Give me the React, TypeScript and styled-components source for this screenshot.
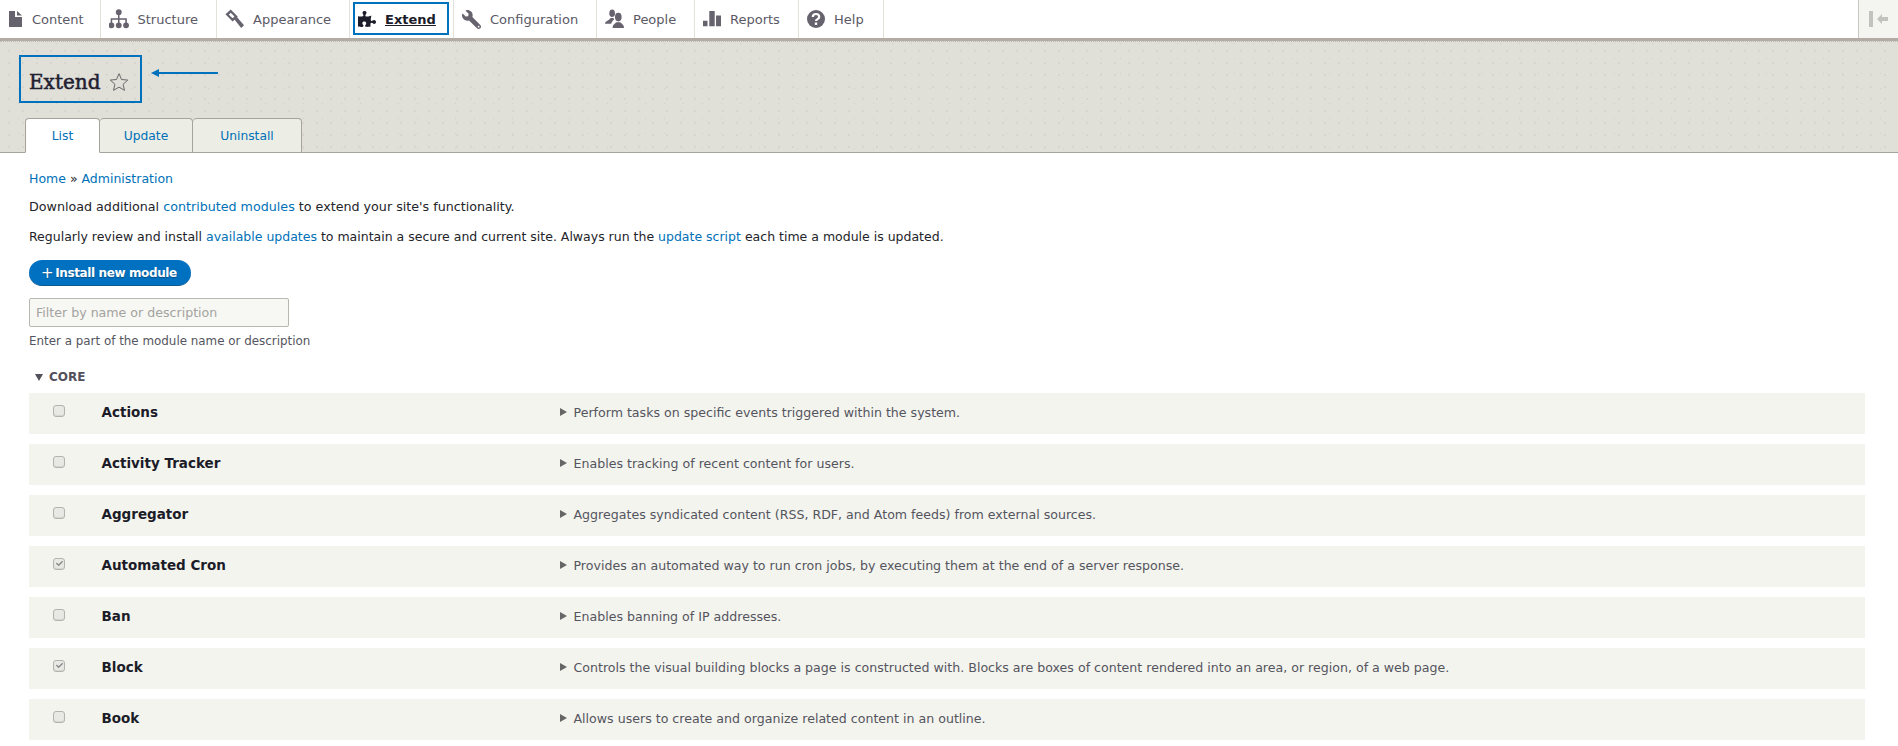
import React from "react";
import styled, { createGlobalStyle } from "styled-components";
import { FaPuzzlePiece, FaWrench, FaCheck } from "react-icons/fa";

const GlobalStyle = createGlobalStyle`
  html, body { margin: 0; padding: 0; background: #fff; }
  body {
    font-family: "DejaVu Sans", Verdana, sans-serif;
    font-size: 12.5px;
    color: #232429;
    overflow: hidden;
  }
  a { color: #0071b8; text-decoration: none; }
`;

const Page = styled.div`
  width: 1898px;
  height: 746px;
  overflow: hidden;
`;

const Toolbar = styled.nav`
  display: flex;
  height: 38px;
  justify-content: space-between;
  background: #fff;
  border-bottom: 3px solid #b3aca5;
`;

const NavList = styled.div`
  display: flex;
`;

const NavItem = styled.a<{ $w: number; $active?: boolean }>`
  display: flex;
  align-items: center;
  gap: 9px;
  box-sizing: border-box;
  width: ${(p) => p.$w}px;
  padding-left: 8px;
  border-right: 1px solid #e2e1da;
  color: ${(p) => (p.$active ? "#1c1c2b" : "#5a5965")};
  font-weight: ${(p) => (p.$active ? 700 : 400)};
  font-size: 13px;
  text-decoration: ${(p) => (p.$active ? "underline" : "none")};
  position: relative;
`;

const ActiveBox = styled.span`
  position: absolute;
  left: 3px;
  top: 2px;
  width: 96px;
  height: 33px;
  box-sizing: border-box;
  border: 2px solid #0071bc;
`;

const IconSlot = styled.span<{ $w: number; $dark?: boolean }>`
  display: flex;
  flex: none;
  width: ${(p) => p.$w}px;
  justify-content: center;
  color: ${(p) => (p.$dark ? "#1c1c2b" : "#66626e")};
`;

const FlippedWrench = styled(FaWrench)`
  transform: scaleX(-1);
`;

const Toggle = styled.div`
  display: flex;
  align-items: center;
  justify-content: center;
  width: 39px;
  background: #f4f4f1;
  border-left: 1px solid #c9c9c4;
`;

const Header = styled.header`
  position: relative;
  height: 112px;
  box-sizing: border-box;
  padding: 13px 0 0 19px;
  background-color: #e0dfd8;
  background-image: radial-gradient(circle, #cbcac5 0.6px, transparent 0.8px),
    radial-gradient(circle, #cfcec9 0.6px, transparent 0.8px);
  background-size: 14px 12px, 19px 15px;
  background-position: 2px 3px, 9px 9px;
  border-top: 1px dotted #bdbbb5;
  border-bottom: 1px solid #a6a39c;
`;

const TitleBox = styled.div`
  display: inline-flex;
  align-items: center;
  gap: 9px;
  box-sizing: border-box;
  width: 123px;
  height: 48px;
  padding: 5px 0 0 8px;
  border: 2px solid #0071bc;
`;

const Title = styled.h1`
  margin: 0;
  font-family: "DejaVu Serif", serif;
  font-size: 20px;
  font-weight: 400;
  color: #1f2030;
  -webkit-text-stroke: 0.5px #1f2030;
`;

const Arrow = styled.svg`
  position: absolute;
  left: 151px;
  top: 25px;
`;

const Tabs = styled.div`
  display: flex;
  position: absolute;
  left: 25px;
  bottom: -1px;
  height: 35px;
`;

const Tab = styled.a<{ $w: number; $active?: boolean }>`
  display: flex;
  align-items: center;
  justify-content: center;
  box-sizing: border-box;
  width: ${(p) => p.$w}px;
  background: ${(p) => (p.$active ? "#fff" : "#ecede5")};
  border: 1px solid #a6a39c;
  border-left-width: ${(p) => (p.$active ? 1 : 0)}px;
  border-bottom-color: ${(p) => (p.$active ? "#fff" : "#a6a39c")};
  border-radius: 4px 4px 0 0;
  font-size: 12.3px;
`;

const Content = styled.main`
  padding: 18px 33px 0 29px;
`;

const Crumbs = styled.p`
  margin: 0 0 12px;
  line-height: 16px;
`;

const Line = styled.p<{ $size?: number }>`
  margin: 0 0 14px;
  line-height: 16px;
  font-size: ${(p) => p.$size ?? 12.5}px;
`;

const InstallButton = styled.a`
  display: inline-flex;
  align-items: center;
  gap: 2px;
  box-sizing: border-box;
  width: 162px;
  height: 26px;
  margin-top: 1px;
  padding-left: 12px;
  border-radius: 13px;
  background: #0071c0;
  border-bottom: 1px solid #0a5a92;
  color: #fff;
  font-weight: 700;
  font-size: 12px;
  letter-spacing: -0.38px;
  text-shadow: 0 1px 1px #0a4f80;
`;

const Plus = styled.span`
  font-weight: 400;
  font-size: 15px;
`;

const Filter = styled.input`
  display: block;
  box-sizing: border-box;
  width: 260px;
  height: 29px;
  margin-top: 12px;
  padding: 0 6px;
  background: #f7f7f3;
  border: 1px solid #b8b8b0;
  border-radius: 2px;
  font-family: inherit;
  font-size: 12.6px;
  &::placeholder { color: #a3a3a0; opacity: 1; }
`;

const Hint = styled.div`
  margin-top: 7px;
  font-size: 11.9px;
  line-height: 14px;
  color: #555560;
`;

const SectionTitle = styled.div`
  display: flex;
  align-items: center;
  gap: 6px;
  margin: 21px 0 8px 6px;
  line-height: 16px;
  font-weight: 700;
  font-size: 12px;
  color: #53505c;
`;

const Caret = styled.span<{ $open?: boolean }>`
  flex: none;
  width: 0;
  height: 0;
  border-style: solid;
  border-color: transparent;
  ${(p) =>
    p.$open
      ? "border-width: 7px 4px 0; border-top-color: #53505c;"
      : "border-width: 4px 0 4px 7px; border-left-color: #666;"}
`;

const Rows = styled.div`
  display: flex;
  flex-direction: column;
  gap: 10px;
`;

const Row = styled.div`
  display: grid;
  grid-template-columns: 72.5px 458px 1fr;
  align-items: center;
  height: 41px;
  background: #f3f4ee;
`;

const CheckBox = styled.span<{ $on?: boolean }>`
  display: flex;
  align-items: center;
  justify-content: center;
  box-sizing: border-box;
  width: 12px;
  height: 12px;
  margin: -6px 0 0 24px;
  border: 1px solid #b4b4af;
  border-radius: 3px;
  background: #e8e8e4;
  color: #8a8a88;
  box-shadow: inset 0 -1px 1px #d5d5d0;
`;

const ModuleName = styled.span`
  margin-top: -4px;
  font-size: 13.5px;
  font-weight: 700;
  color: #1c1c28;
`;

const Description = styled.span`
  display: flex;
  align-items: center;
  gap: 7px;
  margin-top: -3px;
  font-size: 12.6px;
  color: #55555e;
`;

const Doc = () => (
  <svg width="13" height="16" viewBox="0 0 13 16" fill="currentColor">
    <path d="M0 0h6v6h7v10H0z" />
    <path d="M8 0l5 4.500H8z" />
  </svg>
);

const Tree = () => (
  <svg width="20" height="20" viewBox="0 0 20 20" fill="none" stroke="currentColor" strokeWidth="1.600">
    <circle cx="10" cy="3" r="2.200" fill="currentColor" />
    <circle cx="2.500" cy="16.500" r="2.200" fill="currentColor" />
    <circle cx="10" cy="16.500" r="2.200" fill="currentColor" />
    <circle cx="17.500" cy="16.500" r="2.200" fill="currentColor" />
    <path d="M10 5v10M2.500 15v-5h15v5" />
  </svg>
);

const Brush = () => (
  <svg width="20" height="20" viewBox="0 0 20 20" fill="currentColor">
    <path d="M6 0l7.500 7.500-5.500 5L.5 5zM6 3.500L4 5.500l4 3.800 2-2z" fillRule="evenodd" />
    <path d="M10 10.500l2.500-2.500 7.500 8.500-3 3z" />
  </svg>
);

const Users = () => (
  <svg width="20" height="20" viewBox="0 0 20 20" fill="currentColor">
    <ellipse cx="7.500" cy="4" rx="3" ry="4" />
    <path d="M0 15c0-2.500 3-3 5-5l1-1h3l.500 1.500C8 12 7 13 6.500 15z" />
    <ellipse cx="14" cy="8" rx="3.500" ry="4.500" />
    <path d="M8 19.500c0-3.500 2.500-4.500 4-6h4c1.500 1.500 4 2.500 4 6z" />
  </svg>
);

const Bars = () => (
  <svg width="20" height="18" viewBox="0 0 20 18" fill="currentColor">
    <path d="M0 11h5v6H0zM7 0h6v17H7zM14.500 5H20v12h-5.500z" />
  </svg>
);

const Help = () => (
  <svg width="18" height="18" viewBox="0 0 18 18">
    <circle cx="9" cy="9" r="9" fill="currentColor" />
    <path d="M5.800 7c0-4 6.400-4 6.400 0 0 2.200-3.200 2-3.200 4" fill="none" stroke="#fff" strokeWidth="2.200" />
    <rect x="7.800" y="12.500" width="2.400" height="2.400" fill="#fff" />
  </svg>
);

const navItems = [
  { label: "Content", w: 101, slot: 15, icon: <Doc /> },
  { label: "Structure", w: 116, slot: 19.5, icon: <Tree /> },
  { label: "Appearance", w: 133, slot: 19, icon: <Brush /> },
  { label: "Extend", w: 104, slot: 18, icon: <FaPuzzlePiece size={20} />, active: true },
  { label: "Configuration", w: 143, slot: 19, icon: <FlippedWrench size={19} /> },
  { label: "People", w: 98, slot: 19, icon: <Users /> },
  { label: "Reports", w: 104, slot: 18, icon: <Bars /> },
  { label: "Help", w: 85, slot: 18, icon: <Help /> },
];

const modules = [
  { name: "Actions", desc: "Perform tasks on specific events triggered within the system." },
  { name: "Activity Tracker", desc: "Enables tracking of recent content for users." },
  { name: "Aggregator", desc: "Aggregates syndicated content (RSS, RDF, and Atom feeds) from external sources." },
  { name: "Automated Cron", desc: "Provides an automated way to run cron jobs, by executing them at the end of a server response.", on: true },
  { name: "Ban", desc: "Enables banning of IP addresses." },
  { name: "Block", desc: "Controls the visual building blocks a page is constructed with. Blocks are boxes of content rendered into an area, or region, of a web page.", on: true },
  { name: "Book", desc: "Allows users to create and organize related content in an outline." },
];

export default function App() {
  return (
    <Page>
      <GlobalStyle />
      <Toolbar>
        <NavList>
          {navItems.map((n) => (
            <NavItem key={n.label} $w={n.w} $active={n.active}>
              {n.active && <ActiveBox />}
              <IconSlot $w={n.slot} $dark={n.active}>{n.icon}</IconSlot>
              {n.label}
            </NavItem>
          ))}
        </NavList>
        <Toggle>
          <svg width="20" height="16" viewBox="0 0 20 16" fill="#c2c2be">
            <rect x="0" y="0" width="4" height="16" />
            <path d="M8 8l5-5v3h6v4h-6v3z" />
          </svg>
        </Toggle>
      </Toolbar>
      <Header>
        <TitleBox>
          <Title>Extend</Title>
          <svg width="20" height="20" viewBox="0 0 24 24" fill="none" stroke="#6b6a6a" strokeWidth="1.200">
            <path d="M12 2l3 7 7.500.7-5.600 5 1.700 7.300L12 18.200 5.400 22l1.700-7.300-5.600-5L9 9z" />
          </svg>
        </TitleBox>
        <Arrow width="68" height="12" viewBox="0 0 68 12">
          <path d="M0 6l8-4v3h59v2H8v3z" fill="#0071bc" />
        </Arrow>
        <Tabs>
          <Tab $w={75} $active>List</Tab>
          <Tab $w={93}>Update</Tab>
          <Tab $w={109}>Uninstall</Tab>
        </Tabs>
      </Header>
      <Content>
        <Crumbs>
          <a href="#">Home</a> » <a href="#">Administration</a>
        </Crumbs>
        <Line $size={12.7}>
          Download additional <a href="#">contributed modules</a> to extend your site's functionality.
        </Line>
        <Line>
          Regularly review and install <a href="#">available updates</a> to maintain a secure and current site. Always run the <a href="#">update script</a> each time a module is updated.
        </Line>
        <InstallButton href="#"><Plus>+</Plus>Install new module</InstallButton>
        <Filter placeholder="Filter by name or description" />
        <Hint>Enter a part of the module name or description</Hint>
        <SectionTitle>
          <Caret $open />
          CORE
        </SectionTitle>
        <Rows>
          {modules.map((m) => (
            <Row key={m.name}>
              <CheckBox $on={m.on}>{m.on && <FaCheck size={7} />}</CheckBox>
              <ModuleName>{m.name}</ModuleName>
              <Description>
                <Caret />
                {m.desc}
              </Description>
            </Row>
          ))}
        </Rows>
      </Content>
    </Page>
  );
}
